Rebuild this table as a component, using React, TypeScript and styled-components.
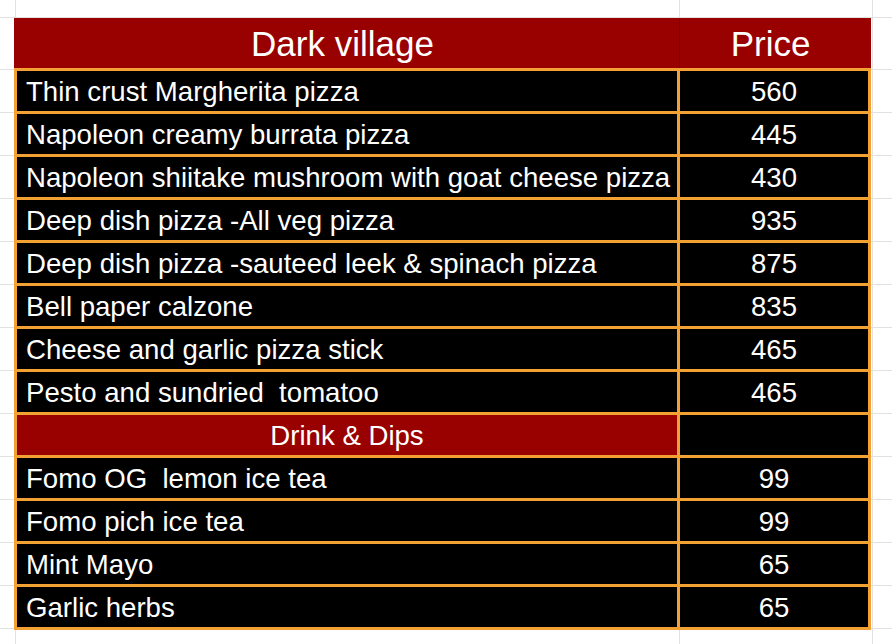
import React from 'react'
import styled, { createGlobalStyle } from 'styled-components'

const GlobalStyle = createGlobalStyle`
  html, body {
    margin: 0;
    padding: 0;
    background: #fff;
  }
`

const gridLine = '#e1e1e1'

interface MenuItem {
  name: string
  price: string
}

const pizzas: MenuItem[] = [
  { name: 'Thin crust Margherita pizza', price: '560' },
  { name: 'Napoleon creamy burrata pizza', price: '445' },
  { name: 'Napoleon shiitake mushroom with goat cheese pizza', price: '430' },
  { name: 'Deep dish pizza -All veg pizza', price: '935' },
  { name: 'Deep dish pizza -sauteed leek & spinach pizza', price: '875' },
  { name: 'Bell paper calzone', price: '835' },
  { name: 'Cheese and garlic pizza stick', price: '465' },
  { name: 'Pesto and sundried  tomatoo', price: '465' },
]

const drinks: MenuItem[] = [
  { name: 'Fomo OG  lemon ice tea', price: '99' },
  { name: 'Fomo pich ice tea', price: '99' },
  { name: 'Mint Mayo', price: '65' },
  { name: 'Garlic herbs', price: '65' },
]

const App: React.FC = () => {
  return (
    <>
      <GlobalStyle />
      <StyledSheet>
        <StyledMenu>
          <StyledHeader>
            <StyledHeaderCell shift={8}>Dark village</StyledHeaderCell>
            <StyledHeaderCell shift={10}>Price</StyledHeaderCell>
          </StyledHeader>
          <StyledBody>
            {pizzas.map((item, i) => (
              <React.Fragment key={'p' + i}>
                <StyledCell>{item.name}</StyledCell>
                <StyledCell center>{item.price}</StyledCell>
              </React.Fragment>
            ))}
            <StyledCell center section>Drink &amp; Dips</StyledCell>
            <StyledCell />
            {drinks.map((item, i) => (
              <React.Fragment key={'d' + i}>
                <StyledCell>{item.name}</StyledCell>
                <StyledCell center>{item.price}</StyledCell>
              </React.Fragment>
            ))}
          </StyledBody>
        </StyledMenu>
      </StyledSheet>
    </>
  )
}

const StyledSheet = styled.div`
  height: 100vh;
  box-sizing: border-box;
  padding: 18px 0 0 14px;
  background:
    linear-gradient(${gridLine}, ${gridLine}) 15px 0 / 1px 100% no-repeat,
    linear-gradient(${gridLine}, ${gridLine}) 679px 0 / 1px 100% no-repeat,
    linear-gradient(${gridLine}, ${gridLine}) 872px 0 / 1px 100% no-repeat,
    linear-gradient(${gridLine}, ${gridLine}) 0 17px / 100% 1px no-repeat,
    repeating-linear-gradient(to bottom, ${gridLine} 0 1px, transparent 1px 43px) 0 69px / 100% 100% no-repeat,
    #fff;
`

const StyledMenu = styled.div`
  width: 857px;
  font-family: 'Liberation Sans', Arial, sans-serif;
  color: #fff;
`

const StyledHeader = styled.div`
  display: grid;
  grid-template-columns: 665px 1fr;
  height: 50px;
  background: #990000;
`

const StyledHeaderCell = styled.div<{ shift?: number }>`
  display: flex;
  align-items: center;
  justify-content: center;
  font-size: 35px;
  padding: 2px ${(props) => props.shift || 0}px 0 0;
  & + & {
    border-left: 1px solid #7d0000;
  }
`

const StyledBody = styled.div`
  display: grid;
  grid-template-columns: 660px 188px;
  grid-auto-rows: 40px;
  gap: 3px;
  padding: 3px;
  background: #f4a133;
`

const StyledCell = styled.div<{ center?: boolean; section?: boolean }>`
  display: flex;
  align-items: center;
  justify-content: ${(props) => (props.center ? 'center' : 'flex-start')};
  padding: 2px 0 0 ${(props) => (props.center ? '0' : '9px')};
  background: ${(props) => (props.section ? '#990000' : '#000')};
  font-size: 27.6px;
  white-space: pre;
  overflow: hidden;
`

export default App
